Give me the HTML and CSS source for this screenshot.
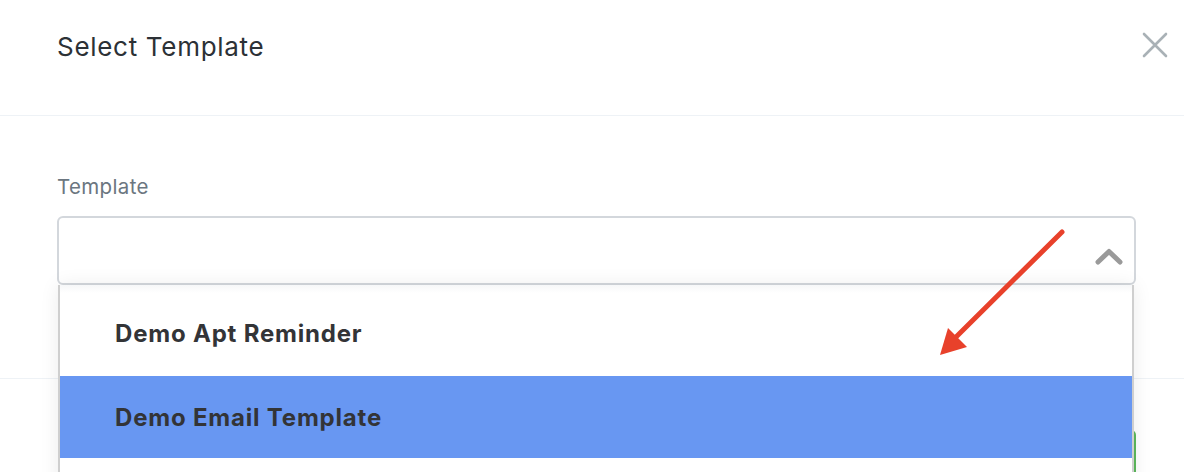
FILE: index.html
```html
<!DOCTYPE html>
<html>
<head>
<meta charset="utf-8">
<link rel="stylesheet" href="styles.css">
</head>
<body>
<div class="modal">
  <div class="modal-header">
    <h2 class="modal-title">Select Template</h2>
    <button class="close" aria-label="Close">
      <svg width="26" height="26" viewBox="0 0 26 26"><path d="M2 2 L24 24 M24 2 L2 24" stroke="#a9b1b6" stroke-width="2.6" stroke-linecap="round" fill="none"/></svg>
    </button>
  </div>
  <div class="modal-body">
    <label class="field-label">Template</label>
    <div class="select-wrap">
      <div class="select-box">
        <svg class="chevron" width="28" height="18" viewBox="0 0 28 18"><polyline points="3,15 14,4.5 25,15" stroke="#9a9a9a" stroke-width="5" stroke-linecap="round" stroke-linejoin="round" fill="none"/></svg>
      </div>
      <ul class="dropdown">
        <li class="option">Demo Apt Reminder</li>
        <li class="option active">Demo Email Template</li>
        <li class="option"></li>
      </ul>
    </div>
  </div>
  <div class="modal-footer">
    <button class="btn-save">Save</button>
  </div>
  <svg class="annotation" width="1184" height="472" viewBox="0 0 1184 472">
    <line x1="1062" y1="232" x2="955" y2="338" stroke="#e8412b" stroke-width="5" stroke-linecap="round"/>
    <polygon points="940,355 948,328 967,347" fill="#e8412b"/>
  </svg>
</div>
</body>
</html>
```
FILE: styles.css
```css
* { box-sizing: border-box; }
html, body { margin: 0; padding: 0; background: #fff; }
body {
  font-family: Inter, "Liberation Sans", Arial, sans-serif;
  width: 1184px;
  height: 472px;
  overflow: hidden;
}
.modal { position: relative; width: 1184px; height: 472px; overflow: hidden; }
.modal-header {
  height: 116px;
  border-bottom: 1px solid #eef2f6;
  display: flex;
  align-items: flex-start;
  justify-content: space-between;
  padding: 30px 16px 0 57px;
}
.modal-title {
  margin: 0;
  margin-top: 1px;
  font-size: 26px;
  font-weight: 400;
  color: #2c3136;
  line-height: 32px;
  letter-spacing: 0.7px;
}
.close {
  border: 0;
  background: none;
  padding: 0;
  margin-top: 2px;
  width: 26px;
  height: 26px;
  cursor: pointer;
}
.close svg { display: block; }
.modal-body {
  padding: 58px 48px 0 57px;
  height: 262px;
}
.field-label {
  display: block;
  font-size: 20.5px;
  color: #6b7680;
  line-height: 26px;
  margin-bottom: 16px;
  letter-spacing: 0.35px;
}
.select-wrap { position: relative; }
.select-box {
  height: 69px;
  border: 2px solid #d3d7dc;
  border-radius: 6px;
  display: flex;
  align-items: center;
  justify-content: flex-end;
  padding-right: 11px;
}
.chevron { display: block; margin-top: 10px; }
.dropdown {
  position: absolute;
  top: 69px;
  left: 1px;
  right: 2px;
  margin: 0;
  padding: 9px 0 0;
  list-style: none;
  background: #fff;
  border-left: 2px solid #cfcfcf;
  border-right: 2px solid #cfcfcf;
  box-shadow: 0 0 18px rgba(0,0,0,0.08);
  z-index: 2;
  background-image: linear-gradient(#f6f7f8, #fff 8px);
}
.option {
  height: 82px;
  display: flex;
  align-items: center;
  padding: 0 0 3px 55px;
  font-size: 24px;
  font-weight: 700;
  color: #333437;
  letter-spacing: 0.8px;
}
.option.active { background: #6897f2; padding-bottom: 0; }
.modal-footer {
  border-top: 1px solid #eef2f6;
  height: 94px;
  display: flex;
  justify-content: flex-end;
  align-items: flex-start;
  padding: 51px 48px 0 0;
}
.btn-save {
  width: 120px;
  height: 50px;
  border: 0;
  border-radius: 5px;
  background: #5cb85c;
  color: #fff;
  font-size: 18px;
}
.annotation {
  position: absolute;
  top: 0;
  left: 0;
  z-index: 5;
  pointer-events: none;
}
```
